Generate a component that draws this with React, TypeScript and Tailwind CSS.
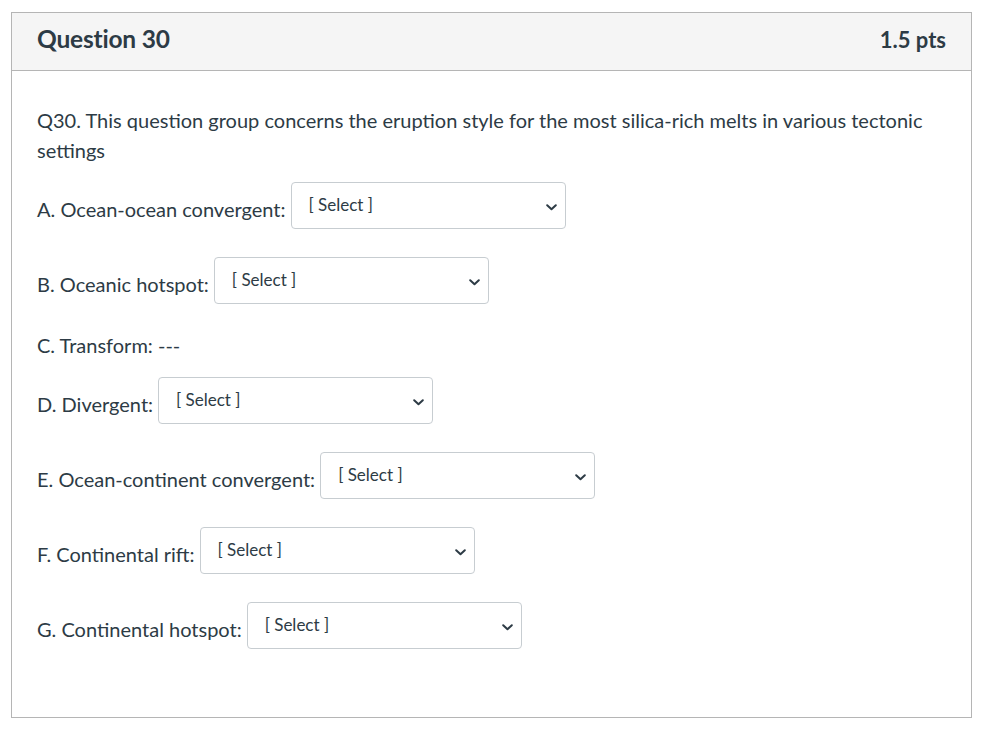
import React from "react";

function Chevron() {
  return (
    <svg width="11" height="7" viewBox="0 0 11 7" className="absolute right-[8px] top-[21px]">
      <path d="M1.2 1.2 L5.5 5.3 L9.8 1.2" fill="none" stroke="#2d3b45" strokeWidth="2" strokeLinecap="round" strokeLinejoin="round" />
    </svg>
  );
}

function FakeSelect() {
  return (
    <div className="relative ml-[5px] h-[47px] w-[275px] shrink-0 rounded-[4px] border border-[#c7cdd1] bg-white">
      <span className="absolute left-[17px] top-[10px] text-[17px] leading-[24px] text-[#2d3b45]">[ Select ]</span>
      <Chevron />
    </div>
  );
}

function Row({ label, className }: { label: string; className?: string }) {
  return (
    <div className={"flex items-start " + (className ?? "")}>
      <span className="pt-[13px] leading-[28px]">{label}</span>
      <FakeSelect />
    </div>
  );
}

export default function App() {
  return (
    <div className="min-h-[754px] w-[988px] bg-white pl-[11px] pt-[12px]" style={{ fontFamily: "Lato, 'Liberation Sans', sans-serif" }}>
      <div className="h-[706px] w-[961px] border border-[#b5b5b5] text-[#2d3b45]">
        <div className="flex h-[58px] items-center justify-between border-b border-[#b5b5b5] bg-[#f5f5f5] pb-[4px] pl-[25px] pr-[25px]">
          <span className="text-[24.5px] font-bold leading-none tracking-[-0.2px]">Question 30</span>
          <span className="text-[22px] font-bold leading-none">1.5 pts</span>
        </div>
        <div className="pl-[25px] pr-[25px] text-[20px]">
          <p className="mt-[34px] leading-[30px]">
            Q30. This question group concerns the eruption style for the most silica-rich melts in various tectonic settings
          </p>
          <Row label="A. Ocean-ocean convergent:" className="mt-[17px]" />
          <Row label="B. Oceanic hotspot:" className="mt-[28px]" />
          <div className="mt-[27px] leading-[28px]">C. Transform: ---</div>
          <Row label="D. Divergent:" className="mt-[18px]" />
          <Row label="E. Ocean-continent convergent:" className="mt-[28px]" />
          <Row label="F. Continental rift:" className="mt-[28px]" />
          <Row label="G. Continental hotspot:" className="mt-[28px]" />
        </div>
      </div>
    </div>
  );
}
